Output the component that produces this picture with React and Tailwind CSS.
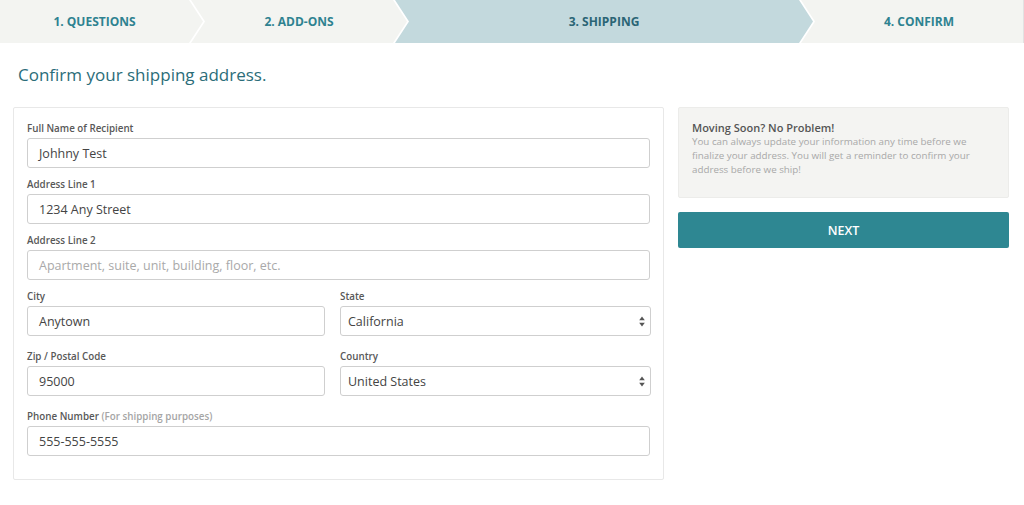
import React from "react";

const font = { fontFamily: '"Open Sans", "Noto Sans", sans-serif' };

function Step({ label, first, last, active, width }) {
  const clip = first
    ? "[clip-path:polygon(0_0,calc(100%-14px)_0,100%_50%,calc(100%-14px)_100%,0_100%)]"
    : last
    ? "[clip-path:polygon(0_0,100%_0,100%_100%,0_100%,14px_50%)]"
    : "[clip-path:polygon(0_0,calc(100%-14px)_0,100%_50%,calc(100%-14px)_100%,0_100%,14px_50%)]";
  return (
    <div
      className={`${clip} ${width} ${first ? "" : "-ml-[12px]"} ${
        active ? "bg-[#c3d9dd] text-[#2b6575]" : "bg-[#f3f4f1] text-[#2e8290]"
      } ${first ? "pr-[14px]" : last ? "pl-[14px]" : "px-[14px]"} h-[43px] flex items-center justify-center pt-[1px] text-[12px] font-bold uppercase shrink-0`}
    >
      {label}
    </div>
  );
}

function Label({ children }) {
  return (
    <div className="text-[9.8px] leading-[15px] font-semibold text-[#585858] mb-[2px]">
      {children}
    </div>
  );
}

function Input({ value, placeholder }) {
  return (
    <div className="h-[30px] border border-[#cfcfcf] rounded-[3px] flex items-center pt-[2px] px-[11px] text-[12.5px] bg-white">
      {value ? (
        <span className="text-[#444]">{value}</span>
      ) : (
        <span className="text-[#a9a9a9]">{placeholder}</span>
      )}
    </div>
  );
}

function Select({ value }) {
  return (
    <div className="h-[30px] border border-[#cfcfcf] rounded-[3px] flex items-center justify-between pl-[7px] pr-[5px] text-[12.5px] bg-white">
      <span className="text-[#444] pt-[2px]">{value}</span>
      <svg width="6" height="11" viewBox="0 0 6 11">
        <polygon points="3,0.5 5.8,4.2 0.2,4.2" fill="#555" />
        <polygon points="3,10.5 5.8,6.8 0.2,6.8" fill="#555" />
      </svg>
    </div>
  );
}

export default function App() {
  return (
    <div className="w-[1024px] h-[505px] bg-white overflow-hidden" style={font}>
      <div className="flex w-[1024px] border-r border-[#e2e2e2]">
        <Step label="1. Questions" first width="w-[203px]" />
        <Step label="2. Add-ons" width="w-[216px]" />
        <Step label="3. Shipping" active width="w-[418px]" />
        <Step label="4. Confirm" last width="w-[222px]" />
      </div>

      <div className="pl-[18px] pt-[20px] h-[44px] text-[17px] leading-[24px] text-[#2b6d79]">
        Confirm your shipping address.
      </div>

      <div className="flex gap-[14px] pl-[13px] pt-[20px]">
        <div className="w-[651px] border border-[#e8e8e8] rounded-[2px] pt-[13px] pb-[23px] px-[13px]">
          <Label>Full Name of Recipient</Label>
          <Input value="Johhny Test" />
          <div className="h-[9px]" />
          <Label>Address Line 1</Label>
          <Input value="1234 Any Street" />
          <div className="h-[9px]" />
          <Label>Address Line 2</Label>
          <Input placeholder="Apartment, suite, unit, building, floor, etc." />
          <div className="h-[9px]" />
          <div className="grid grid-cols-[298px_311px] gap-x-[15px]">
            <div>
              <Label>City</Label>
              <Input value="Anytown" />
            </div>
            <div>
              <Label>State</Label>
              <Select value="California" />
            </div>
          </div>
          <div className="h-[13px]" />
          <div className="grid grid-cols-[298px_311px] gap-x-[15px]">
            <div>
              <Label>Zip / Postal Code</Label>
              <Input value="95000" />
            </div>
            <div>
              <Label>Country</Label>
              <Select value="United States" />
            </div>
          </div>
          <div className="h-[13px]" />
          <Label>
            Phone Number <span className="text-[#a5a5a5]">(For shipping purposes)</span>
          </Label>
          <Input value="555-555-5555" />
        </div>

        <div className="w-[331px] flex flex-col gap-[14px]">
          <div className="h-[91px] bg-[#f4f4f2] border border-[#ececea] rounded-[2px] px-[13px] pt-[12px]">
            <div className="text-[11px] leading-[15px] font-semibold text-[#555]">
              Moving Soon? No Problem!
            </div>
            <div className="text-[9.8px] leading-[14px] text-[#a8a8a8] pr-[14px]">
              You can always update your information any time before we finalize your address. You will
              get a reminder to confirm your address before we ship!
            </div>
          </div>
          <div className="h-[36px] bg-[#2e8792] rounded-[2px] flex items-center justify-center pt-[2px] text-white text-[12.5px] font-semibold">
            NEXT
          </div>
        </div>
      </div>
    </div>
  );
}
